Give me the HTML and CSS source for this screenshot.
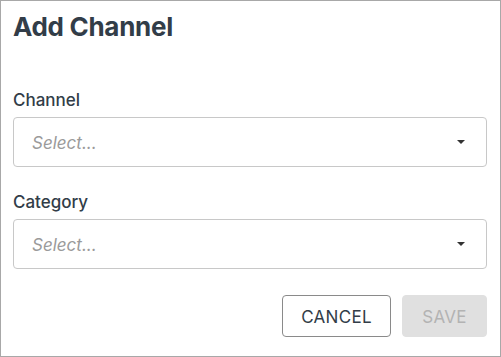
FILE: index.html
```html
<!DOCTYPE html>
<html lang="en">
<head>
    <meta charset="UTF-8">
    <meta name="viewport" content="width=device-width, initial-scale=1.0">
    <title>Add Channel</title>
    <link rel="stylesheet" href="styles.css">
</head>
<body>
    <div class="dialog">
        <h2 class="dialog-title">Add Channel</h2>

        <div class="field">
            <label class="field-label">Channel</label>
            <div class="select">
                <span class="select-placeholder">Select...</span>
                <span class="select-caret"></span>
            </div>
        </div>

        <div class="field">
            <label class="field-label">Category</label>
            <div class="select">
                <span class="select-placeholder">Select...</span>
                <span class="select-caret"></span>
            </div>
        </div>

        <div class="actions">
            <button class="btn btn-outline">CANCEL</button>
            <button class="btn btn-disabled" disabled>SAVE</button>
        </div>
    </div>
</body>
</html>
```

FILE: styles.css
```css
:root {
    --text: #323d48;
    --border: #c8c8c8;
    --frame: #a8a8a8;
    --placeholder: #9a9a9a;
}

* {
    box-sizing: border-box;
}

body {
    margin: 0;
    font-family: Inter, "Liberation Sans", sans-serif;
    color: var(--text);
    background: #ffffff;
}

.dialog {
    width: 501px;
    height: 357px;
    border: 1px solid var(--frame);
    padding: 11px 13px 0 12px;
}

.dialog-title {
    margin: 0;
    font-size: 26px;
    font-weight: 700;
    line-height: 30px;
    letter-spacing: -0.3px;
}

.field {
    margin-top: 48px;
}

.field + .field {
    margin-top: 25px;
}

.field-label {
    display: block;
    font-size: 17px;
    font-weight: 500;
    line-height: 20px;
    margin-bottom: 7px;
}

.select {
    display: flex;
    align-items: center;
    justify-content: space-between;
    height: 50px;
    padding: 0 21px 0 18px;
    border: 1px solid var(--border);
    border-radius: 4px;
}

.select-placeholder {
    padding-top: 2px;
    font-size: 17px;
    font-style: italic;
    color: var(--placeholder);
}

.select-caret {
    width: 0;
    height: 0;
    border-left: 4px solid transparent;
    border-right: 4px solid transparent;
    border-top: 4px solid #333;
}

.actions {
    display: flex;
    justify-content: flex-end;
    gap: 11px;
    margin-top: 26px;
}

.btn {
    height: 42px;
    padding: 2px 0 0;
    font-family: inherit;
    font-size: 17px;
    letter-spacing: 0.3px;
    border-radius: 4px;
    background: #ffffff;
}

.btn-outline {
    width: 109px;
    border: 1px solid #8a8a8a;
    color: var(--text);
}

.btn-disabled {
    width: 85px;
    border: 1px solid #e0e0e0;
    background: #e0e0e0;
    color: #b3b3b3;
}
```
